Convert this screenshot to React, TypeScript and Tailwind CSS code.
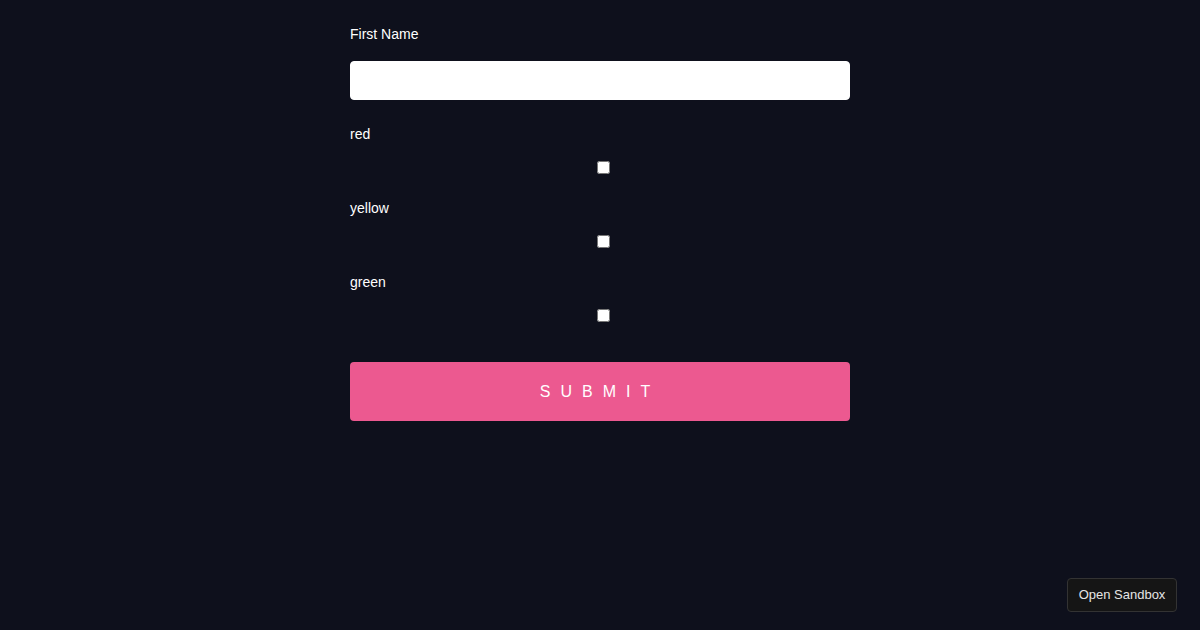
import { useState } from "react";

const colors = ["red", "yellow", "green"];

export default function App() {
    const [firstName, setFirstName] = useState("");
    const [checked, setChecked] = useState<Record<string, boolean>>({});

    return (
        <div className="relative min-h-[630px] w-full bg-[#0e101c] font-['Liberation_Sans',Arial,sans-serif] text-white">
            <form className="mx-auto flex w-[500px] flex-col" onSubmit={(e) => e.preventDefault()}>
                <label className="mt-5 block text-[14px] leading-[28px] font-light">First Name</label>
                <input
                    value={firstName}
                    onChange={(e) => setFirstName(e.target.value)}
                    className="mt-[13px] block h-[39px] w-full rounded-[4px] border border-white bg-white px-[15px] text-[14px] text-black outline-none"
                />

                {colors.map((c) => (
                    <div key={c}>
                        <label className="mt-5 block text-[14px] leading-[28px] font-light">{c}</label>
                        {/* checkbox sits in the middle of the full-width box */}
                        <div className="mt-[13px] flex justify-center pl-[7px]">
                            <input
                                type="checkbox"
                                checked={!!checked[c]}
                                onChange={() => setChecked({ ...checked, [c]: !checked[c] })}
                                className="m-0 block h-[13px] w-[13px]"
                            />
                        </div>
                    </div>
                ))}

                <button
                    type="submit"
                    className="mt-10 h-[59px] w-full rounded-[4px] bg-[#ec5990] text-[16px] font-thin tracking-[10px] text-white uppercase"
                >
                    Submit
                </button>
            </form>

            <button className="absolute right-[23px] bottom-[18px] h-[34px] w-[110px] rounded-[4px] border border-[#333] bg-[#151515] text-[13px] text-[#e5e5e5]">
                Open Sandbox
            </button>
        </div>
    );
}
